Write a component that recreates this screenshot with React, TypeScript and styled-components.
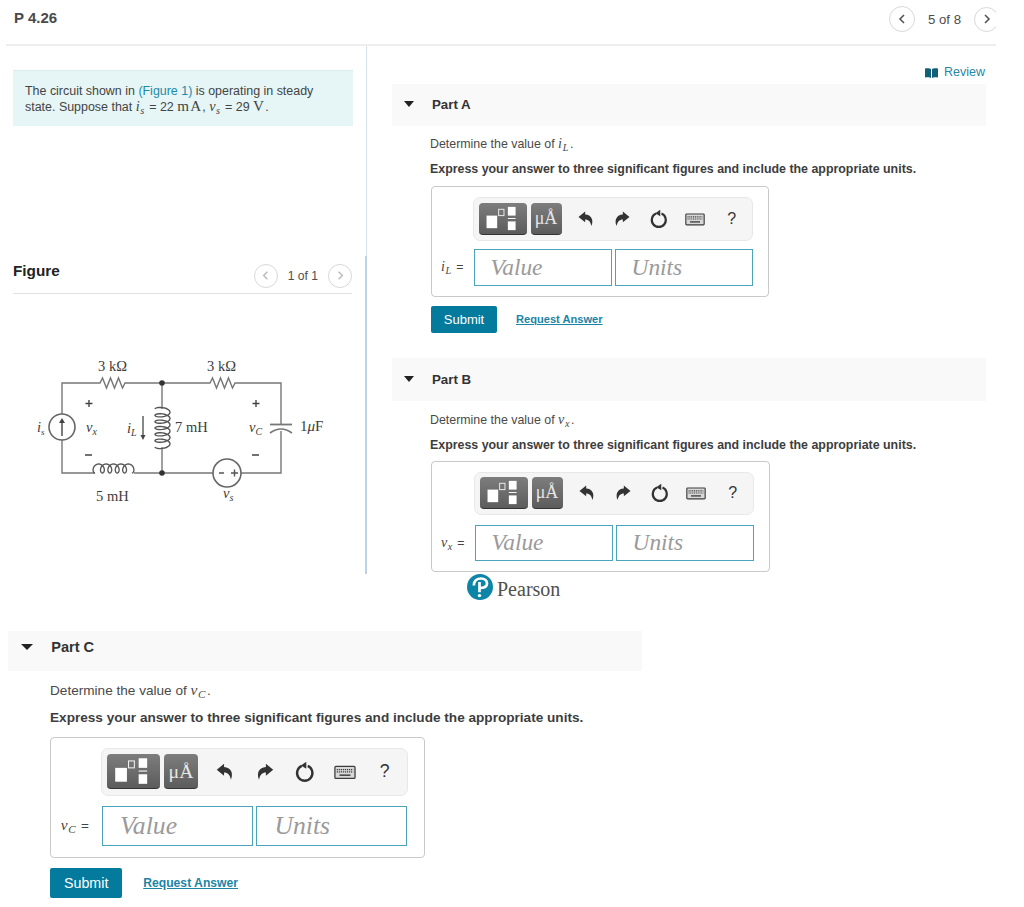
import React from "react";
import styled, { createGlobalStyle } from "styled-components";

const Global = createGlobalStyle`
  html, body { margin: 0; padding: 0; background: #fff; }
  body { font-family: "Liberation Sans", Arial, sans-serif; color: #3d3d3d; }
  * { box-sizing: border-box; }
`;

const Page = styled.div`
  width: 1024px;
  height: 907px;
  overflow: hidden;
  position: relative;
  display: flex;
  flex-direction: column;
`;

const Header = styled.header`
  margin-left: 6px;
  width: 990px;
  height: 46px;
  flex: none;
  display: flex;
  align-items: flex-start;
  justify-content: space-between;
  border-bottom: 2px solid #eeeeee;
  overflow: hidden;
  padding: 6px 0 0 8px;
`;

const Title = styled.h1`
  margin: 3px 0 0;
  font-size: 15px;
  line-height: 18px;
  font-weight: 700;
  color: #4a4a4a;
`;

const Pager = styled.div`
  display: flex;
  align-items: center;
  margin-right: -3px;
`;

const PagerText = styled.span`
  font-size: 13.2px;
  color: #4d4d4d;
  margin: 1px 13px 0;
`;

const NavButton = styled.span<{ $size: number; $color: string }>`
  width: ${(p) => p.$size}px;
  height: ${(p) => p.$size}px;
  flex: none;
  border-radius: 50%;
  border: 1.5px solid #d8d8d8;
  display: flex;
  align-items: center;
  justify-content: center;
  color: ${(p) => p.$color};
  background: #fff;
`;

const Body = styled.div`
  display: flex;
  height: 528px;
  flex: none;
`;

const LeftColumn = styled.aside`
  margin-left: 6px;
  width: 361px;
  flex: none;
  display: flex;
  flex-direction: column;
  border-right: 1px solid #d5e3f0;
`;

const Callout = styled.div`
  margin: 24px 0 0 7px;
  width: 340px;
  height: 56px;
  background: #e6f5f6;
  border-top: 1px solid #dcedef;
  padding: 13px 12px 0;
  font-size: 12.45px;
  line-height: 15.5px;
  color: #444;
`;

const Link = styled.span`
  color: #1c8bab;
`;

const MathText = styled.span`
  font-family: "Liberation Serif", "Times New Roman", serif;
  font-style: italic;
  font-size: 1.14em;
  line-height: 0;
  letter-spacing: 0.6px;
  margin-right: 1px;
`;

const MathUpright = styled.span`
  font-family: "Liberation Serif", "Times New Roman", serif;
  font-size: 1.22em;
  line-height: 0;
  letter-spacing: 1.1px;
`;

const Sub = styled.sub`
  font-size: 0.72em;
  line-height: 0;
  vertical-align: -0.25em;
`;

const FigurePanel = styled.section`
  margin-top: 130px;
  flex: 1;
  margin-right: -1px;
  border-right: 2px solid #bcd2e5;
  display: flex;
  flex-direction: column;
`;

const FigureHead = styled.div`
  margin: 0 13px 0 7px;
  height: 38px;
  display: flex;
  align-items: center;
  justify-content: space-between;
  border-bottom: 1px solid #e2e2e2;
  padding-top: 2px;
`;

const FigureTitle = styled.h2`
  margin: -9px 0 0;
  font-size: 15.3px;
  font-weight: 700;
  color: #222;
`;

const FigurePager = styled.div`
  display: flex;
  align-items: center;
  gap: 10px;
  font-size: 12.1px;
  color: #4d4d4d;
`;

const CircuitWrap = styled.div`
  margin: 46px 0 0 14px;
`;

const RightColumn = styled.main`
  flex: none;
  width: 594px;
  margin-left: 25px;
  display: flex;
  flex-direction: column;
`;

const ReviewRow = styled.div`
  height: 38px;
  padding: 19px 1px 0 0;
  display: flex;
  justify-content: flex-end;
  align-items: flex-start;
  gap: 6px;
  font-size: 12.5px;
  line-height: 15px;
  color: #2a86a4;
`;

const PartBar = styled.div<{ $h: number; $k: number; $pad: number }>`
  --k: ${(p) => p.$k};
  height: ${(p) => p.$h}px;
  background: #f9f9f9;
  display: flex;
  align-items: center;
  padding: 0 0 ${(p) => p.$pad}px calc(var(--k) * 12px);
  font-size: calc(var(--k) * 13.3px);
  font-weight: 700;
  color: #333;
`;

const Triangle = styled.span`
  width: 0;
  height: 0;
  border-left: calc(var(--k) * 5.5px) solid transparent;
  border-right: calc(var(--k) * 5.5px) solid transparent;
  border-top: calc(var(--k) * 6px) solid #222;
  margin-right: 18px;
`;

type Metrics = {
  k: number;
  left: number;
  barPad: number;
  promptGap: number;
  insGap: number;
  boxGap: number;
  toolLeft: number;
  inputGap: number;
  labelW: number;
  boxW: number;
  shift: number;
};

const PartContent = styled.div<{ $m: Metrics }>`
  --k: ${(p) => p.$m.k};
  --tool-left: ${(p) => p.$m.toolLeft}px;
  --label-w: ${(p) => p.$m.labelW}px;
  --box-w: ${(p) => p.$m.boxW}px;
  --box-gap: ${(p) => p.$m.boxGap}px;
  --ins-gap: ${(p) => p.$m.insGap}px;
  --prompt-gap: ${(p) => p.$m.promptGap}px;
  --input-gap: ${(p) => p.$m.inputGap}px;
  --shift: ${(p) => p.$m.shift}px;
  padding-left: ${(p) => p.$m.left}px;
  display: flex;
  flex-direction: column;
`;

const Prompt = styled.p`
  margin: var(--prompt-gap) 0 0;
  font-size: calc(var(--k) * 12.4px);
  line-height: calc(var(--k) * 15px);
  color: #4a4a4a;
`;

const Instruction = styled.p`
  margin: var(--ins-gap) 0 0;
  font-size: calc(var(--k) * 12.4px);
  line-height: calc(var(--k) * 15px);
  font-weight: 700;
  color: #3d3d3d;
`;

const AnswerBox = styled.div`
  margin: var(--box-gap) 0 0 var(--shift);
  width: var(--box-w);
  border: 1.5px solid #c9c9c9;
  border-radius: 4px;
  padding: 10px 0 calc(var(--k) * 10px);
`;

const Toolbar = styled.div`
  margin-left: var(--tool-left);
  width: calc(var(--k) * 280px);
  height: calc(var(--k) * 43.5px);
  background: #f5f5f5;
  border: 1px solid #e8e8e8;
  border-radius: 7px;
  display: flex;
  align-items: center;
  padding-left: calc(var(--k) * 5px);
`;

const DarkButton = styled.span<{ $w: number }>`
  width: calc(var(--k) * ${(p) => p.$w}px);
  height: calc(var(--k) * 32px);
  margin-right: calc(var(--k) * 4px);
  flex: none;
  border-radius: 4px;
  border-bottom: 1px solid #333;
  background: linear-gradient(#7d7d7d, #5c5c5c);
  color: #e6e6e6;
  display: flex;
  align-items: center;
  justify-content: center;
  font-family: "Liberation Serif", serif;
  font-size: calc(var(--k) * 18px);
`;

const ToolIcons = styled.div`
  margin-left: calc(var(--k) * 2px);
  display: flex;
  align-items: center;
`;

const ToolIcon = styled.span`
  width: calc(var(--k) * 36.5px);
  flex: none;
  display: flex;
  justify-content: center;
  align-items: center;
  color: #333;
  font-size: calc(var(--k) * 16px);
  & svg {
    width: calc(var(--k) * 20px);
    height: calc(var(--k) * 20px);
  }
`;

const InputRow = styled.div`
  margin-top: var(--input-gap);
  display: flex;
  align-items: center;
  gap: 3px;
`;

const InputLabel = styled.span`
  width: var(--label-w);
  flex: none;
  padding-left: calc(var(--k) * 9px);
  font-size: calc(var(--k) * 12.3px);
  white-space: nowrap;
  color: #444;
`;

const Field = styled.span`
  width: calc(var(--k) * 138px);
  height: calc(var(--k) * 36.5px);
  flex: none;
  border: 1.5px solid #4ba3bc;
  display: flex;
  align-items: center;
  padding-left: calc(var(--k) * 16px);
  font-family: "Liberation Serif", serif;
  font-style: italic;
  font-size: calc(var(--k) * 23.4px);
  color: #9a9a9a;
`;

const Actions = styled.div`
  margin-top: calc(var(--k) * 10px - 1px);
  display: flex;
  align-items: center;
  gap: calc(var(--k) * 19px);
  margin-left: var(--shift);
`;

const SubmitButton = styled.span`
  width: calc(var(--k) * 66px);
  height: calc(var(--k) * 27px);
  background: #047a9c;
  border-radius: 2px;
  color: #fff;
  font-size: calc(var(--k) * 13px);
  display: flex;
  align-items: center;
  justify-content: center;
`;

const RequestLink = styled.span`
  font-size: calc(var(--k) * 11.1px);
  font-weight: 700;
  color: #1c84a4;
  text-decoration: underline;
`;

const Pearson = styled.div`
  margin: 0 0 0 467px;
  height: 27px;
  flex: none;
  display: flex;
  align-items: flex-start;
  overflow: hidden;
  gap: 4px;
  font-family: "Liberation Serif", serif;
  font-size: 20px;
  line-height: 30px;
  color: #505050;
`;

const PartC = styled.section`
  margin: 30px 0 0 8px;
  width: 634px;
`;

const PartSpacer = styled.div`
  height: 25px;
  flex: none;
`;

const Math = ({ v, s }: { v: string; s?: string }) => (
  <MathText>
    {v}
    {s && <Sub>{s}</Sub>}
  </MathText>
);

const Chevron = ({ dir, size = 12, sw = 1.6 }: { dir: "l" | "r"; size?: number; sw?: number }) => (
  <svg width={size} height={size} viewBox="0 0 12 12" fill="none" stroke="currentColor" strokeWidth={sw}>
    <path d={dir === "l" ? "M8 2 L4 6 L8 10" : "M4 2 L8 6 L4 10"} />
  </svg>
);

const BookIcon = () => (
  <svg width="13" height="10" viewBox="0 0 13 10" fill="#135f78" style={{ marginTop: 3 }}>
    <path d="M0 0.5 C2 0 5 0 6 1 V10 C5 9 2 9 0 9.5 Z M7 1 C8 0 11 0 13 0.5 V9.5 C11 9 8 9 7 10 Z" />
  </svg>
);

const TemplateGlyph = () => (
  <svg viewBox="0 0 48 32" width="100%" height="100%">
    <rect x="7" y="13" width="11" height="13" fill="#fff" />
    <rect x="19.5" y="6.5" width="5.5" height="6.5" fill="none" stroke="#eee" strokeWidth="1" />
    <rect x="29" y="4" width="8" height="9" fill="#fff" />
    <rect x="29" y="15.5" width="8" height="1" fill="#fff" />
    <rect x="29" y="19" width="8" height="9" fill="#fff" />
  </svg>
);

const UndoIcon = () => (
  <svg viewBox="0 0 24 24" fill="currentColor">
    <path d="M11 3 L3 9.5 L11 16 V12.5 C15 12.5 17.5 15 18.5 20.5 C21.5 13 18.5 7 11 6.5 Z" />
  </svg>
);

const RedoIcon = () => (
  <svg viewBox="0 0 24 24" fill="currentColor">
    <path d="M13 3 L21 9.5 L13 16 V12.5 C9 12.5 6.5 15 5.5 20.5 C2.5 13 5.5 7 13 6.5 Z" />
  </svg>
);

const ResetIcon = () => (
  <svg viewBox="0 0 24 24" fill="none" stroke="currentColor" strokeWidth="2.6">
    <path d="M8.5 5.4a8.4 8.4 0 1 0 6.5 0" />
    <path d="M13.5 0.8v7.8l-6-3.6z" fill="currentColor" stroke="none" />
  </svg>
);

const KeyboardIcon = () => (
  <svg viewBox="0 0 24 24" fill="none">
    <rect x="1" y="6" width="22" height="13" fill="#d8d8d8" stroke="#3d3d3d" strokeWidth="1.4" rx="1" />
    <path d="M3 9.5h18M3 12h18" stroke="#3d3d3d" strokeWidth="1.4" strokeDasharray="1.3 0.9" />
    <path d="M6 15.5h12" stroke="#3d3d3d" strokeWidth="1.6" />
  </svg>
);

const MathToolbar = () => (
  <Toolbar>
    <DarkButton $w={48}>
      <TemplateGlyph />
    </DarkButton>
    <DarkButton $w={31}>μÅ</DarkButton>
    <ToolIcons>
      <ToolIcon><UndoIcon /></ToolIcon>
      <ToolIcon><RedoIcon /></ToolIcon>
      <ToolIcon><ResetIcon /></ToolIcon>
      <ToolIcon><KeyboardIcon /></ToolIcon>
      <ToolIcon>?</ToolIcon>
    </ToolIcons>
  </Toolbar>
);

const Part = ({
  name,
  v,
  s,
  m,
  barH,
  submit = true,
}: {
  name: string;
  v: string;
  s: string;
  m: Metrics;
  barH: number;
  submit?: boolean;
}) => (
  <>
    <PartBar $h={barH} $k={m.k} $pad={m.barPad}>
      <Triangle />
      {name}
    </PartBar>
    <PartContent $m={m}>
      <Prompt>
        Determine the value of <Math v={v} s={s} />.
      </Prompt>
      <Instruction>Express your answer to three significant figures and include the appropriate units.</Instruction>
      <AnswerBox>
        <MathToolbar />
        <InputRow>
          <InputLabel>
            <Math v={v} s={s} /> =
          </InputLabel>
          <Field>Value</Field>
          <Field>Units</Field>
        </InputRow>
      </AnswerBox>
      {submit && (
        <Actions>
          <SubmitButton>Submit</SubmitButton>
          <RequestLink>Request Answer</RequestLink>
        </Actions>
      )}
    </PartContent>
  </>
);

const metricsA: Metrics = { k: 1, left: 38, barPad: 2, promptGap: 11, insGap: 10, boxGap: 9, toolLeft: 40.5, inputGap: 8.5, labelW: 38.5, boxW: 338, shift: 1 };
const metricsB: Metrics = { k: 1, left: 38, barPad: 0, promptGap: 12, insGap: 10, boxGap: 8, toolLeft: 41.5, inputGap: 9.5, labelW: 39.5, boxW: 339, shift: 1 };
const metricsC: Metrics = { k: 1.097, left: 42, barPad: 8, promptGap: 12, insGap: 11, boxGap: 10, toolLeft: 49.5, inputGap: 10.3, labelW: 47.5, boxW: 375, shift: 0 };

const serif = "'Liberation Serif', 'Times New Roman', serif";

const coil = (
  turns: number,
  length: number,
  back: number,
  point: (along: number, phase: number) => [number, number]
) => {
  const steps = turns * 24;
  const end = 2 * globalThis.Math.PI * turns;
  const pts: string[] = [];
  for (let i = 0; i <= steps; i++) {
    const t = (end * i) / steps;
    const along = (length * t) / end - back * globalThis.Math.sin(t);
    const [x, y] = point(along, (1 - globalThis.Math.cos(t)) / 2);
    pts.push(`${x.toFixed(2)} ${y.toFixed(2)}`);
  }
  return "M" + pts.join(" L");
};

const Circuit = () => (
  <svg width="330" height="180" viewBox="20 340 330 180" fill="none">
    <g stroke="#777" strokeWidth="1.4">
      <path d="M62 414 V383 H100 l2.5-5 4 10 4-10 4 10 4-10 4 10 2.5-5 H210 l2.5-5 4 10 4-10 4 10 4-10 4 10 2.5-5 H281 V424" />
      <path d="M281 431 V473 H241" />
      <path d="M213 473 H134 M95 473 H62 V440" />
      <path d="M162 383 V409 M162 447 V473" />
      <path stroke="#555" strokeWidth="1.3" d={coil(5, 37, 3.6, (a, p) => [95 + a, 473 - 9 * p])} />
      <path stroke="#555" strokeWidth="1.4" d={coil(6, 38, 3, (a, p) => [155 + 15 * p, 409 + a])} />
      <circle cx="62" cy="427" r="13" strokeWidth="1.6" stroke="#666" />
      <circle cx="227" cy="473" r="14" strokeWidth="1.6" stroke="#666" />
      <path d="M62 436 V420" stroke="#444" />
      <path d="M270 424.5 H292" strokeWidth="1.8" />
      <path d="M270 433 Q281 425 292 433" strokeWidth="1.6" />
      <path d="M143 416 V438" stroke="#555" />
      <path d="M219 473 h5 M231 473 h7 M234.5 469.5 v7" stroke="#555" />
      <path d="M89 400 v7 M85.5 403.5 h7 M256 400 v7 M252.5 403.5 h7" stroke="#444" />
      <path d="M85 455 h7 M252 455 h7" stroke="#444" />
    </g>
    <path d="M62 418 l-3 5 h6 z M143 440 l-2.5-5 h5 z" fill="#444" />
    <circle cx="162" cy="383" r="2.8" fill="#333" />
    <circle cx="162" cy="473" r="2.8" fill="#333" />
    <g fill="#3c3c3c" fontFamily={serif} fontSize="14.5">
      <text x="98" y="371">3 kΩ</text>
      <text x="207" y="371">3 kΩ</text>
      <text x="96" y="501">5 mH</text>
      <text x="175" y="432">7 mH</text>
      <text x="300" y="431" fontSize="15">1<tspan fontStyle="italic">μ</tspan>F</text>
      <g fontStyle="italic">
        <text x="37" y="432">i<tspan fontSize="9" dy="3">s</tspan></text>
        <text x="86" y="432">v<tspan fontSize="10" dy="3">x</tspan></text>
        <text x="127" y="433">i<tspan fontSize="10" dy="3">L</tspan></text>
        <text x="249" y="432">v<tspan fontSize="10" dy="3">C</tspan></text>
        <text x="223" y="498">v<tspan fontSize="10" dy="3">s</tspan></text>
      </g>
    </g>
  </svg>
);

const PearsonMark = () => (
  <svg width="26" height="26" viewBox="0 0 26 26" style={{ flex: "none" }}>
    <circle cx="13" cy="13" r="13" fill="#0d85a6" />
    <g stroke="#fff" strokeWidth="2.7" fill="none">
      <path d="M6.8 11.5 C6.8 6.5 10.5 4.5 14 4.5 C18 4.5 20 7 20 9.5 C20 12.6 17 14 12.5 14" />
      <path d="M12.5 8 V18.2" />
    </g>
    <circle cx="12.5" cy="21.6" r="1.7" fill="#fff" />
  </svg>
);

export default function App() {
  return (
    <Page>
      <Global />
      <Header>
        <Title>P 4.26</Title>
        <Pager>
          <NavButton $size={26} $color="#555"><Chevron dir="l" /></NavButton>
          <PagerText>5 of 8</PagerText>
          <NavButton $size={25} $color="#555"><Chevron dir="r" /></NavButton>
        </Pager>
      </Header>
      <Body>
        <LeftColumn>
          <Callout>
            The circuit shown in <Link>(Figure 1)</Link> is operating in steady state. Suppose that{" "}
            <Math v="i" s="s" /> = 22 <MathUpright>mA</MathUpright>, <Math v="v" s="s" /> = 29 <MathUpright>V</MathUpright>.
          </Callout>
          <FigurePanel>
            <FigureHead>
              <FigureTitle>Figure</FigureTitle>
              <FigurePager>
                <NavButton $size={24} $color="#bbb"><Chevron dir="l" size={11} /></NavButton>
                1 of 1
                <NavButton $size={24} $color="#bbb"><Chevron dir="r" size={11} /></NavButton>
              </FigurePager>
            </FigureHead>
            <CircuitWrap>
              <Circuit />
            </CircuitWrap>
          </FigurePanel>
        </LeftColumn>
        <RightColumn>
          <ReviewRow>
            <BookIcon />
            Review
          </ReviewRow>
          <Part name="Part A" v="i" s="L" barH={42} m={metricsA} />
          <PartSpacer />
          <Part name="Part B" v="v" s="x" barH={43} m={metricsB} submit={false} />
        </RightColumn>
      </Body>
      <Pearson>
        <PearsonMark />
        Pearson
      </Pearson>
      <PartC>
        <Part name="Part C" v="v" s="C" barH={40} m={metricsC} />
      </PartC>
    </Page>
  );
}
